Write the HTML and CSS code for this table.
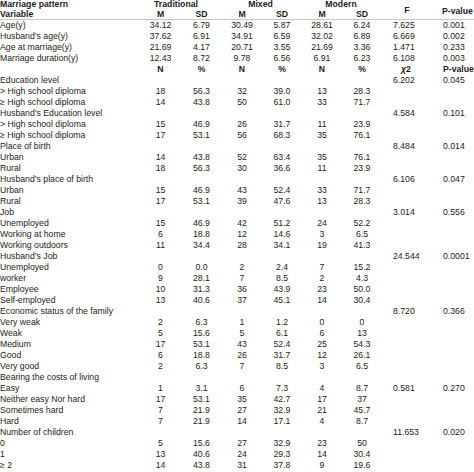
FILE: index.html
```html
<!DOCTYPE html>
<html>
<head>
<meta charset="utf-8">
<link rel="stylesheet" href="styles.css">
</head>
<body>
<div class="table">
  <div class="head">
    <span class="h lab r1">Marriage pattern</span>
    <span class="h grp trad">Traditional</span>
    <span class="h grp mix">Mixed</span>
    <span class="h grp mod">Modern</span>
    <span class="h fh">F</span>
    <span class="h ph">P-value</span>
    <span class="h lab r2">Variable</span>
    <span class="h c r2">M</span>
    <span class="h c r2">SD</span>
    <span class="h c r2">M</span>
    <span class="h c r2">SD</span>
    <span class="h c r2">M</span>
    <span class="h c r2">SD</span>
  </div>
  <div class="row"><span>Age(y)</span><span class="c">34.12</span><span class="c">6.79</span><span class="c">30.49</span><span class="c">5.87</span><span class="c">28.61</span><span class="c">6.24</span><span class="f">7.625</span><span class="p">0.001</span></div>
  <div class="row"><span>Husband’s age(y)</span><span class="c">37.62</span><span class="c">6.91</span><span class="c">34.91</span><span class="c">6.59</span><span class="c">32.02</span><span class="c">6.89</span><span class="f">6.669</span><span class="p">0.002</span></div>
  <div class="row"><span>Age at marriage(y)</span><span class="c">21.69</span><span class="c">4.17</span><span class="c">20.71</span><span class="c">3.55</span><span class="c">21.69</span><span class="c">3.36</span><span class="f">1.471</span><span class="p">0.233</span></div>
  <div class="row"><span>Marriage duration(y)</span><span class="c">12.43</span><span class="c">8.72</span><span class="c">9.78</span><span class="c">6.56</span><span class="c">6.91</span><span class="c">6.23</span><span class="f">6.108</span><span class="p">0.003</span></div>
  <div class="row bold"><span></span><span class="c">N</span><span class="c">%</span><span class="c">N</span><span class="c">%</span><span class="c">N</span><span class="c">%</span><span class="fc"><i>χ</i>2</span><span class="p">P-value</span></div>
  <div class="row"><span>Education level</span><span class="f">6.202</span><span class="p">0.045</span></div>
  <div class="row"><span>&gt; High school diploma</span><span class="c">18</span><span class="c">56.3</span><span class="c">32</span><span class="c">39.0</span><span class="c">13</span><span class="c">28.3</span></div>
  <div class="row"><span>≥ High school diploma</span><span class="c">14</span><span class="c">43.8</span><span class="c">50</span><span class="c">61.0</span><span class="c">33</span><span class="c">71.7</span></div>
  <div class="row"><span>Husband’s Education level</span><span class="f">4.584</span><span class="p">0.101</span></div>
  <div class="row"><span>&gt; High school diploma</span><span class="c">15</span><span class="c">46.9</span><span class="c">26</span><span class="c">31.7</span><span class="c">11</span><span class="c">23.9</span></div>
  <div class="row"><span>≥ High school diploma</span><span class="c">17</span><span class="c">53.1</span><span class="c">56</span><span class="c">68.3</span><span class="c">35</span><span class="c">76.1</span></div>
  <div class="row"><span>Place of birth</span><span class="f">8.484</span><span class="p">0.014</span></div>
  <div class="row"><span>Urban</span><span class="c">14</span><span class="c">43.8</span><span class="c">52</span><span class="c">63.4</span><span class="c">35</span><span class="c">76.1</span></div>
  <div class="row"><span>Rural</span><span class="c">18</span><span class="c">56.3</span><span class="c">30</span><span class="c">36.6</span><span class="c">11</span><span class="c">23.9</span></div>
  <div class="row"><span>Husband’s place of birth</span><span class="f">6.106</span><span class="p">0.047</span></div>
  <div class="row"><span>Urban</span><span class="c">15</span><span class="c">46.9</span><span class="c">43</span><span class="c">52.4</span><span class="c">33</span><span class="c">71.7</span></div>
  <div class="row"><span>Rural</span><span class="c">17</span><span class="c">53.1</span><span class="c">39</span><span class="c">47.6</span><span class="c">13</span><span class="c">28.3</span></div>
  <div class="row"><span>Job</span><span class="f">3.014</span><span class="p">0.556</span></div>
  <div class="row"><span>Unemployed</span><span class="c">15</span><span class="c">46.9</span><span class="c">42</span><span class="c">51.2</span><span class="c">24</span><span class="c">52.2</span></div>
  <div class="row"><span>Working at home</span><span class="c">6</span><span class="c">18.8</span><span class="c">12</span><span class="c">14.6</span><span class="c">3</span><span class="c">6.5</span></div>
  <div class="row"><span>Working outdoors</span><span class="c">11</span><span class="c">34.4</span><span class="c">28</span><span class="c">34.1</span><span class="c">19</span><span class="c">41.3</span></div>
  <div class="row"><span>Husband’s Job</span><span class="f">24.544</span><span class="p">0.0001</span></div>
  <div class="row"><span>Unemployed</span><span class="c">0</span><span class="c">0.0</span><span class="c">2</span><span class="c">2.4</span><span class="c">7</span><span class="c">15.2</span></div>
  <div class="row"><span>worker</span><span class="c">9</span><span class="c">28.1</span><span class="c">7</span><span class="c">8.5</span><span class="c">2</span><span class="c">4.3</span></div>
  <div class="row"><span>Employee</span><span class="c">10</span><span class="c">31.3</span><span class="c">36</span><span class="c">43.9</span><span class="c">23</span><span class="c">50.0</span></div>
  <div class="row"><span>Self-employed</span><span class="c">13</span><span class="c">40.6</span><span class="c">37</span><span class="c">45.1</span><span class="c">14</span><span class="c">30.4</span></div>
  <div class="row"><span>Economic status of the family</span><span class="f">8.720</span><span class="p">0.366</span></div>
  <div class="row"><span>Very weak</span><span class="c">2</span><span class="c">6.3</span><span class="c">1</span><span class="c">1.2</span><span class="c">0</span><span class="c">0</span></div>
  <div class="row"><span>Weak</span><span class="c">5</span><span class="c">15.6</span><span class="c">5</span><span class="c">6.1</span><span class="c">6</span><span class="c">13</span></div>
  <div class="row"><span>Medium</span><span class="c">17</span><span class="c">53.1</span><span class="c">43</span><span class="c">52.4</span><span class="c">25</span><span class="c">54.3</span></div>
  <div class="row"><span>Good</span><span class="c">6</span><span class="c">18.8</span><span class="c">26</span><span class="c">31.7</span><span class="c">12</span><span class="c">26.1</span></div>
  <div class="row"><span>Very good</span><span class="c">2</span><span class="c">6.3</span><span class="c">7</span><span class="c">8.5</span><span class="c">3</span><span class="c">6.5</span></div>
  <div class="row"><span>Bearing the costs of living</span></div>
  <div class="row"><span>Easy</span><span class="c">1</span><span class="c">3.1</span><span class="c">6</span><span class="c">7.3</span><span class="c">4</span><span class="c">8.7</span><span class="f">0.581</span><span class="p">0.270</span></div>
  <div class="row"><span>Neither easy Nor hard</span><span class="c">17</span><span class="c">53.1</span><span class="c">35</span><span class="c">42.7</span><span class="c">17</span><span class="c">37</span></div>
  <div class="row"><span>Sometimes hard</span><span class="c">7</span><span class="c">21.9</span><span class="c">27</span><span class="c">32.9</span><span class="c">21</span><span class="c">45.7</span></div>
  <div class="row"><span>Hard</span><span class="c">7</span><span class="c">21.9</span><span class="c">14</span><span class="c">17.1</span><span class="c">4</span><span class="c">8.7</span></div>
  <div class="row"><span>Number of children</span><span class="f">11.653</span><span class="p">0.020</span></div>
  <div class="row"><span>0</span><span class="c">5</span><span class="c">15.6</span><span class="c">27</span><span class="c">32.9</span><span class="c">23</span><span class="c">50</span></div>
  <div class="row"><span>1</span><span class="c">13</span><span class="c">40.6</span><span class="c">24</span><span class="c">29.3</span><span class="c">14</span><span class="c">30.4</span></div>
  <div class="row"><span>≥ 2</span><span class="c">14</span><span class="c">43.8</span><span class="c">31</span><span class="c">37.8</span><span class="c">9</span><span class="c">19.6</span></div>
</div>
</body>
</html>
```

FILE: styles.css
```css
html, body {
  margin: 0;
  padding: 0;
  background: #ffffff;
}
body {
  font-family: "Liberation Sans", Arial, sans-serif;
  font-size: 8.7px;
  color: #1c1c1c;
  overflow: hidden;
}
.table {
  width: 474px;
}
.head {
  display: grid;
  grid-template-columns: 140px 41px 41px 40px 40px 40px 40px 48px 44px;
  grid-template-rows: 9px 10px;
  border-bottom: 1px solid #c8c8c8;
  white-space: nowrap;
}
.h {
  font-weight: bold;
}
.r1 {
  line-height: 9px;
  grid-row: 1;
  grid-column: 1;
}
.r2 {
  line-height: 10px;
  grid-row: 2;
}
.grp {
  grid-row: 1;
  line-height: 9px;
  text-align: center;
}
.trad {
  grid-column: 2 / 4;
  padding-right: 10px;
}
.mix {
  grid-column: 4 / 6;
  padding-right: 3px;
}
.mod {
  grid-column: 6 / 8;
  padding-right: 2px;
}
.fh {
  grid-column: 8;
  grid-row: 1 / 3;
  align-self: center;
  text-align: center;
  padding-left: 2px;
  line-height: 10px;
}
.ph {
  grid-column: 9;
  grid-row: 1 / 3;
  align-self: center;
  padding-left: 12px;
  line-height: 10px;
  padding-top: 2px;
}
.row {
  display: grid;
  grid-template-columns: 140px 41px 41px 40px 40px 40px 40px 48px 44px;
  height: 11px;
  line-height: 11px;
  white-space: nowrap;
}
.row.bold {
  font-weight: bold;
}
.c {
  text-align: center;
}
.f {
  grid-column: 8;
  padding-left: 11px;
}
.fc {
  grid-column: 8;
  text-align: center;
}
.p {
  grid-column: 9;
  padding-left: 13px;
}
```
